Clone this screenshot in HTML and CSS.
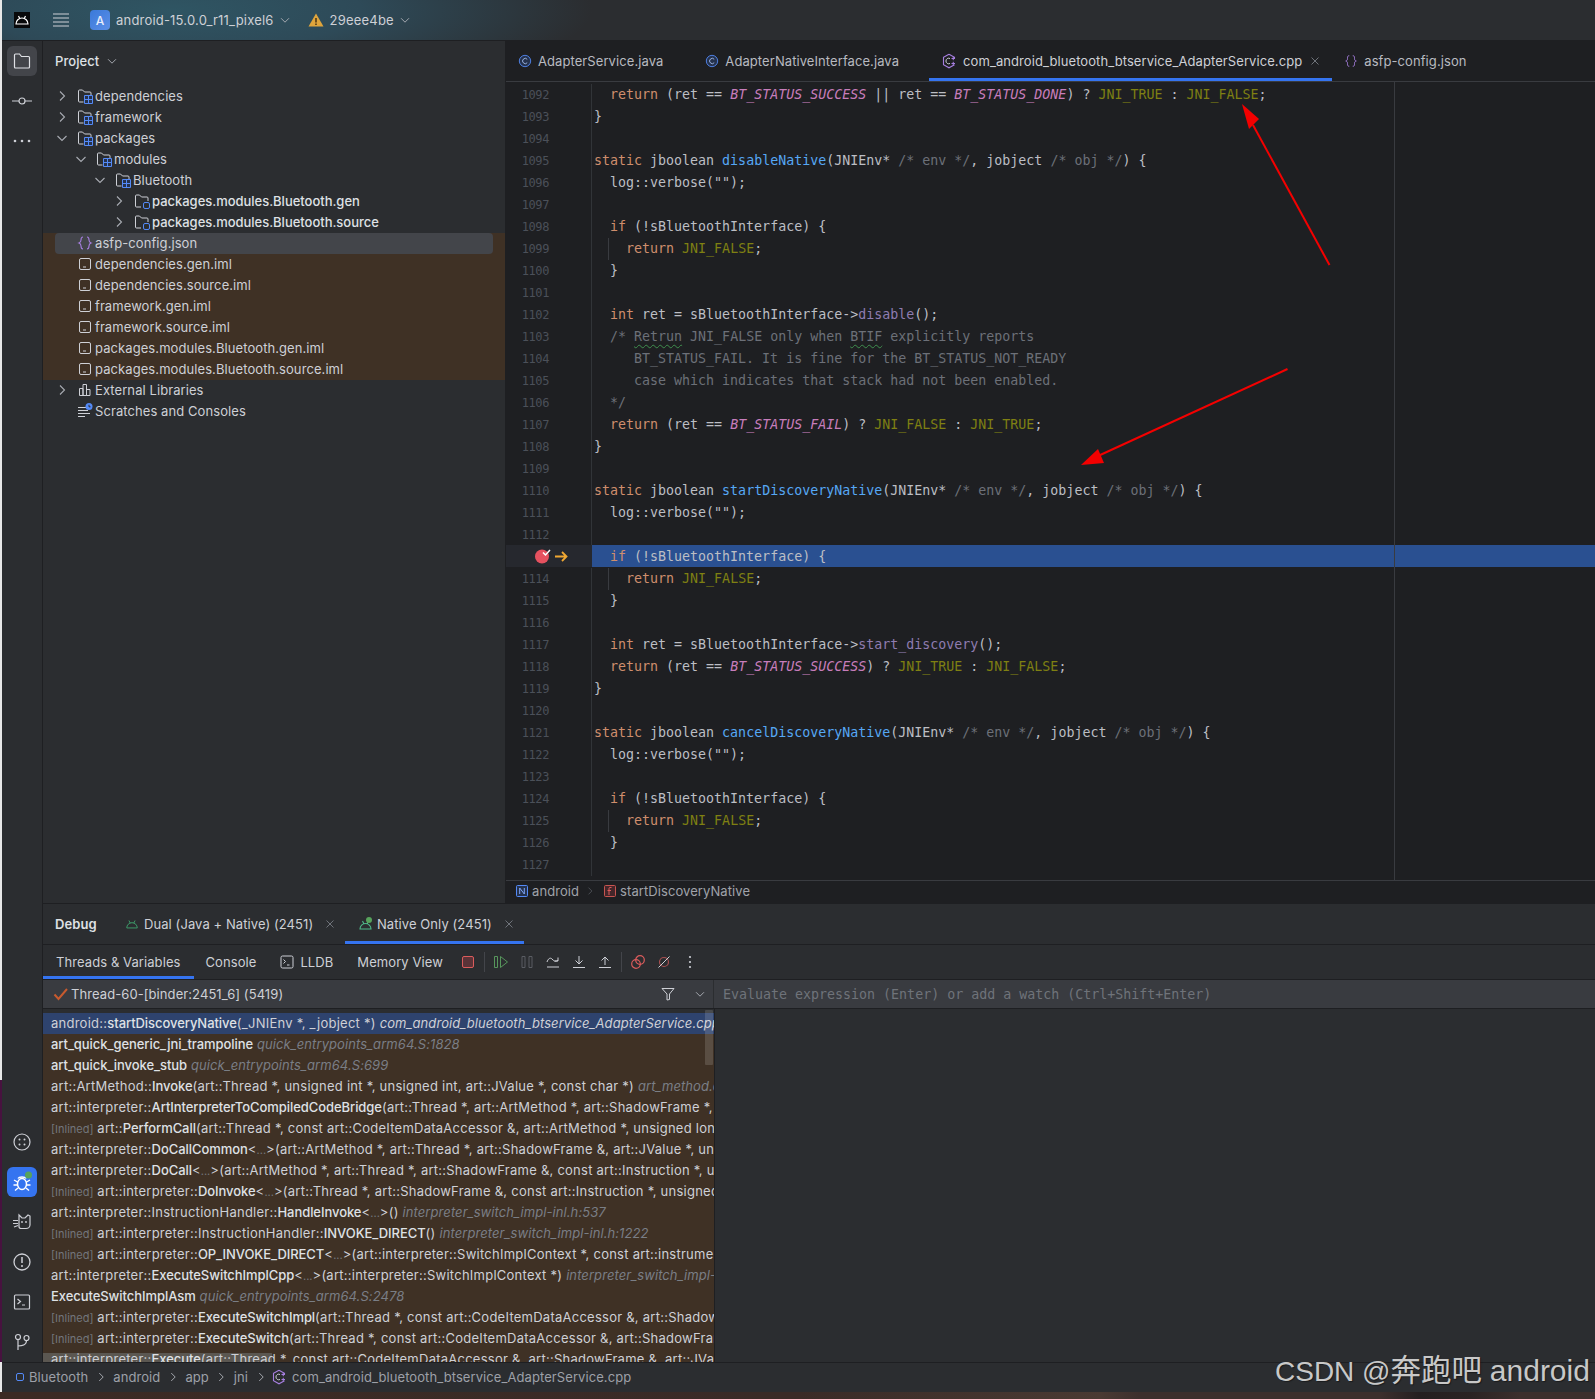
FILE: index.html
```html
<!DOCTYPE html>
<html lang="en">
<head>
<meta charset="utf-8">
<title>Android Studio</title>
<link rel="stylesheet" href="styles.css">
</head>
<body>
<svg class="defs" width="0" height="0">
  <symbol id="chev-r" viewBox="0 0 16 16"><path d="M6 3.5 10.5 8 6 12.500" fill="none" stroke="#a8abb2" stroke-width="1.1"/></symbol>
  <symbol id="chev-d" viewBox="0 0 16 16"><path d="M3.500 6 8 10.500 12.500 6" fill="none" stroke="#a8abb2" stroke-width="1.1"/></symbol>
  <symbol id="mod" viewBox="0 0 16 16"><path d="M6.500 14H2.500a1 1 0 0 1-1-1V3a1 1 0 0 1 1-1h3l2 2h5.500a1 1 0 0 1 1 1v2" fill="none" stroke="#ced0d6"/><path d="M7.500 7.500h8v8h-8z" fill="#25324d" stroke="#548af7"/><path d="M7.500 11.500h8M11.500 7.500v8" stroke="#548af7"/></symbol>
  <symbol id="src" viewBox="0 0 16 16"><path d="M7 14H2.500a1 1 0 0 1-1-1V3a1 1 0 0 1 1-1h3l2 2h5.500a1 1 0 0 1 1 1v3" fill="none" stroke="#ced0d6"/><rect x="9.500" y="9.500" width="6" height="6" rx="1.500" fill="#2b2d30" stroke="#548af7"/></symbol>
  <symbol id="json" viewBox="0 0 16 16"><path d="M6 2C4 2 4 3 4 5s-.5 2.500-2 3c1.500.5 2 1 2 3s0 3 2 3M10 2c2 0 2 1 2 3s.5 2.500 2 3c-1.500.5-2 1-2 3s0 3-2 3" fill="none" stroke="#a77fe0" stroke-width="1.100"/></symbol>
  <symbol id="iml" viewBox="0 0 16 16"><rect x="2.500" y="2.500" width="11" height="11" rx="1.500" fill="none" stroke="#ced0d6"/><path d="M6 11h3" stroke="#ced0d6"/></symbol>
  <symbol id="lib" viewBox="0 0 16 16"><path d="M2.500 6.500h3.500v7H2.500zM6 2.500h3.500v11H6zM9.500 7.500h3.500v6H9.500z" fill="none" stroke="#ced0d6"/></symbol>
  <symbol id="scr" viewBox="0 0 16 16"><path d="M1 4.500h8M1 7.500h10M1 10.500h12M1 13.500h7" stroke="#ced0d6"/><circle cx="12" cy="3.500" r="3.500" fill="#548af7"/><path d="M12 1.800v2h1.500" stroke="#2b2d30" fill="none"/></symbol>
  <symbol id="cls" viewBox="0 0 16 16"><circle cx="8" cy="8" r="6.500" fill="#25324d" stroke="#548af7"/><path d="M10.500 6a3 3 0 1 0 0 4" fill="none" stroke="#a8c0f0"/></symbol>
  <symbol id="cpp" viewBox="0 0 16 16"><path d="M8 1.200 13.500 4.300v1M13.500 11.700 8 14.800 2.500 11.700V4.300L8 1.200" fill="none" stroke="#a77fe0" stroke-width="1.100"/><path d="M9 5.500a2.800 2.800 0 1 0 0 5" fill="none" stroke="#ced0d6"/><path d="M10.500 5.500h3.500M12.250 3.800v3.400M10.500 10.500h3.500M12.250 8.800v3.400" stroke="#a77fe0"/></symbol>
  <symbol id="close" viewBox="0 0 10 10"><path d="M1.500 1.500l7 7M8.500 1.500l-7 7" stroke="#6f737a"/></symbol>
  <symbol id="droid" viewBox="0 0 16 16"><path d="M2 12.500a6 6 0 0 1 12 0zM4.500 4 6 7M11.500 4 10 7" fill="none" stroke="#3d9c6a" stroke-width="1.100"/></symbol>
</svg>

<div class="app">
  <div class="edge"></div>
  <div class="main">
    <header class="titlebar">
      <span class="logo"><svg width="16" height="16" viewBox="0 0 16 16"><path d="M2 12a6 6 0 0 1 12 0zM4.500 4 6 7M11.500 4 10 7" fill="none" stroke="#fff" stroke-width="1.200"/></svg></span>
      <span class="burger"><svg width="16" height="14" viewBox="0 0 16 14"><path d="M0 1h16M0 5h16M0 9h16M0 13h16" stroke="#ced0d6"/></svg></span>
      <span class="badge">A</span>
      <span class="t-name">android-15.0.0_r11_pixel6</span>
      <svg class="t-chev" width="14" height="14"><use href="#chev-d"/></svg>
      <svg class="t-warn" width="16" height="14" viewBox="0 0 16 14"><path d="M8 .500 15.500 13.500H.500z" fill="#e0a53c"/><path d="M8 5v4.500M8 10.500v1.500" stroke="#3a2a10" stroke-width="1.400"/></svg>
      <span class="t-branch">29eee4be</span>
      <svg class="t-chev" width="14" height="14"><use href="#chev-d"/></svg>
    </header>

    <div class="work">
      <nav class="strip">
        <div class="strip-group">
          <span class="tool on"><svg width="20" height="20" viewBox="0 0 20 20"><path d="M2.500 16V4a1 1 0 0 1 1-1h4l2 2.500h7a1 1 0 0 1 1 1V16a1 1 0 0 1-1 1h-13a1 1 0 0 1-1-1z" fill="none" stroke="#dfe1e5" stroke-width="1.200"/></svg></span>
          <span class="tool"><svg width="20" height="20" viewBox="0 0 20 20"><circle cx="10" cy="10" r="3" fill="none" stroke="#ced0d6" stroke-width="1.200"/><path d="M0 10h7M13 10h7" stroke="#ced0d6" stroke-width="1.200"/></svg></span>
          <span class="tool"><svg width="20" height="20" viewBox="0 0 20 20"><circle cx="3" cy="10" r="1.300" fill="#ced0d6"/><circle cx="10" cy="10" r="1.300" fill="#ced0d6"/><circle cx="17" cy="10" r="1.300" fill="#ced0d6"/></svg></span>
        </div>
        <div class="strip-group">
          <span class="tool"><svg width="20" height="20" viewBox="0 0 20 20"><circle cx="10" cy="10" r="8" fill="none" stroke="#ced0d6" stroke-width="1.200"/><circle cx="7.500" cy="7.500" r="1" fill="#ced0d6"/><circle cx="12.500" cy="7.500" r="1" fill="#ced0d6"/><circle cx="7.500" cy="12.500" r="1" fill="#ced0d6"/><circle cx="12.500" cy="12.500" r="1" fill="#ced0d6"/></svg></span>
          <span class="tool bug"><svg width="24" height="24" viewBox="0 0 24 24"><ellipse cx="12" cy="14" rx="4.500" ry="5.500" fill="none" stroke="#fff" stroke-width="1.500"/><path d="M8 8.500c1-2 7-2 8 0M7.500 12 4 10M7.500 15H3.500M8 18l-3 2.500M16.500 12l3.500-2M16.500 15h4M16 18l3 2.500" fill="none" stroke="#fff" stroke-width="1.400"/><circle cx="18.500" cy="5" r="3.500" fill="#57a35c"/></svg></span>
          <span class="tool"><svg width="20" height="20" viewBox="0 0 20 20"><path d="M7 3 10 6h3l3-3 2 1v9c0 2-2 3.500-4 3.500H9c-1 0-2-.5-2-2zM1 8.500h5M1 11.500h5M2 15l4-1.500" fill="none" stroke="#ced0d6" stroke-width="1.200"/><circle cx="10" cy="10" r=".9" fill="#ced0d6"/><circle cx="14" cy="10" r=".9" fill="#ced0d6"/></svg></span>
          <span class="tool"><svg width="20" height="20" viewBox="0 0 20 20"><circle cx="10" cy="10" r="8" fill="none" stroke="#ced0d6" stroke-width="1.300"/><path d="M10 5v6M10 13v2" stroke="#ced0d6" stroke-width="1.500"/></svg></span>
          <span class="tool"><svg width="20" height="20" viewBox="0 0 20 20"><rect x="2.500" y="3" width="15" height="14" rx="1" fill="none" stroke="#ced0d6" stroke-width="1.200"/><path d="M5.500 7l3 2.500-3 2.500M10 13h3" fill="none" stroke="#ced0d6" stroke-width="1.200"/></svg></span>
          <span class="tool"><svg width="20" height="20" viewBox="0 0 20 20"><circle cx="6" cy="5" r="2.500" fill="none" stroke="#ced0d6" stroke-width="1.200"/><circle cx="14.500" cy="6" r="2.500" fill="none" stroke="#ced0d6" stroke-width="1.200"/><path d="M6 7.500V18M6 14c4 0 8.500-1 8.500-5.500" fill="none" stroke="#ced0d6" stroke-width="1.200"/></svg></span>
        </div>
      </nav>

      <div class="content">
        <div class="top">
          <aside class="project">
            <div class="p-head"><span>Project</span><svg width="14" height="14"><use href="#chev-d"/></svg></div>
            <div class="row"><div class="ri d0"><svg class="ch" width="16" height="16"><use href="#chev-r"/></svg><svg class="ic" width="16" height="16"><use href="#mod"/></svg>dependencies</div></div>
            <div class="row"><div class="ri d0"><svg class="ch" width="16" height="16"><use href="#chev-r"/></svg><svg class="ic" width="16" height="16"><use href="#mod"/></svg>framework</div></div>
            <div class="row"><div class="ri d0"><svg class="ch" width="16" height="16"><use href="#chev-d"/></svg><svg class="ic" width="16" height="16"><use href="#mod"/></svg>packages</div></div>
            <div class="row"><div class="ri d1"><svg class="ch" width="16" height="16"><use href="#chev-d"/></svg><svg class="ic" width="16" height="16"><use href="#mod"/></svg>modules</div></div>
            <div class="row"><div class="ri d2"><svg class="ch" width="16" height="16"><use href="#chev-d"/></svg><svg class="ic" width="16" height="16"><use href="#mod"/></svg>Bluetooth</div></div>
            <div class="row"><div class="ri d3 strong"><svg class="ch" width="16" height="16"><use href="#chev-r"/></svg><svg class="ic" width="16" height="16"><use href="#src"/></svg>packages.modules.Bluetooth.gen</div></div>
            <div class="row"><div class="ri d3 strong"><svg class="ch" width="16" height="16"><use href="#chev-r"/></svg><svg class="ic" width="16" height="16"><use href="#src"/></svg>packages.modules.Bluetooth.source</div></div>
            <div class="row ign"><div class="ri d0 sel"><span class="ch-sp"></span><svg class="ic" width="16" height="16"><use href="#json"/></svg>asfp-config.json</div></div>
            <div class="row ign"><div class="ri d0"><span class="ch-sp"></span><svg class="ic" width="16" height="16"><use href="#iml"/></svg>dependencies.gen.iml</div></div>
            <div class="row ign"><div class="ri d0"><span class="ch-sp"></span><svg class="ic" width="16" height="16"><use href="#iml"/></svg>dependencies.source.iml</div></div>
            <div class="row ign"><div class="ri d0"><span class="ch-sp"></span><svg class="ic" width="16" height="16"><use href="#iml"/></svg>framework.gen.iml</div></div>
            <div class="row ign"><div class="ri d0"><span class="ch-sp"></span><svg class="ic" width="16" height="16"><use href="#iml"/></svg>framework.source.iml</div></div>
            <div class="row ign"><div class="ri d0"><span class="ch-sp"></span><svg class="ic" width="16" height="16"><use href="#iml"/></svg>packages.modules.Bluetooth.gen.iml</div></div>
            <div class="row ign"><div class="ri d0"><span class="ch-sp"></span><svg class="ic" width="16" height="16"><use href="#iml"/></svg>packages.modules.Bluetooth.source.iml</div></div>
            <div class="row"><div class="ri d0"><svg class="ch" width="16" height="16"><use href="#chev-r"/></svg><svg class="ic" width="16" height="16"><use href="#lib"/></svg>External Libraries</div></div>
            <div class="row"><div class="ri d0"><span class="ch-sp"></span><svg class="ic" width="16" height="16"><use href="#scr"/></svg>Scratches and Consoles</div></div>
          </aside>

          <section class="editor">
            <div class="tabs">
              <div class="tab"><svg width="14" height="14"><use href="#cls"/></svg>AdapterService.java</div>
              <div class="tab"><svg width="14" height="14"><use href="#cls"/></svg>AdapterNativeInterface.java</div>
              <div class="tab active"><svg width="16" height="16"><use href="#cpp"/></svg>com_android_bluetooth_btservice_AdapterService.cpp<svg class="x" width="10" height="10"><use href="#close"/></svg></div>
              <div class="tab"><svg width="14" height="14"><use href="#json"/></svg>asfp-config.json</div>
            </div>
            <div class="lines">
              <div class="ln"><b>1092</b><code>  <i class="k">return</i> (ret == <i class="m">BT_STATUS_SUCCESS</i> <u>||</u> ret == <i class="m">BT_STATUS_DONE</i>) ? <i class="j">JNI_TRUE</i> : <i class="j">JNI_FALSE</i>;</code></div>
              <div class="ln"><b>1093</b><code>}</code></div>
              <div class="ln"><b>1094</b><code></code></div>
              <div class="ln"><b>1095</b><code><i class="k">static</i> jboolean <i class="f">disableNative</i>(JNIEnv* <i class="c">/* env */</i>, jobject <i class="c">/* obj */</i>) {</code></div>
              <div class="ln"><b>1096</b><code>  log::verbose(<i class="s">""</i>);</code></div>
              <div class="ln"><b>1097</b><code></code></div>
              <div class="ln"><b>1098</b><code>  <i class="k">if</i> (!sBluetoothInterface) {</code></div>
              <div class="ln"><b>1099</b><code class="guide">    <i class="k">return</i> <i class="j">JNI_FALSE</i>;</code></div>
              <div class="ln"><b>1100</b><code>  }</code></div>
              <div class="ln"><b>1101</b><code></code></div>
              <div class="ln"><b>1102</b><code>  <i class="k">int</i> ret = sBluetoothInterface-&gt;<i class="p">disable</i>();</code></div>
              <div class="ln"><b>1103</b><code>  <i class="c">/* <em>Retrun</em> JNI_FALSE only when <em>BTIF</em> explicitly reports</i></code></div>
              <div class="ln"><b>1104</b><code>     <i class="c">BT_STATUS_FAIL. It is fine for the BT_STATUS_NOT_READY</i></code></div>
              <div class="ln"><b>1105</b><code>     <i class="c">case which indicates that stack had not been enabled.</i></code></div>
              <div class="ln"><b>1106</b><code>  <i class="c">*/</i></code></div>
              <div class="ln"><b>1107</b><code>  <i class="k">return</i> (ret == <i class="m">BT_STATUS_FAIL</i>) ? <i class="j">JNI_FALSE</i> : <i class="j">JNI_TRUE</i>;</code></div>
              <div class="ln"><b>1108</b><code>}</code></div>
              <div class="ln"><b>1109</b><code></code></div>
              <div class="ln"><b>1110</b><code><i class="k">static</i> jboolean <i class="f">startDiscoveryNative</i>(JNIEnv* <i class="c">/* env */</i>, jobject <i class="c">/* obj */</i>) {</code></div>
              <div class="ln"><b>1111</b><code>  log::verbose(<i class="s">""</i>);</code></div>
              <div class="ln"><b>1112</b><code></code></div>
              <div class="ln exec"><b><svg width="36" height="16" viewBox="0 0 36 16"><circle cx="8" cy="8.500" r="7" fill="#e5515f"/><path d="M9 4.500l2.500 2.500L16 2" fill="none" stroke="#fff" stroke-width="1.500"/><path d="M21 8.500h11M28 4l4.500 4.500L28 13" fill="none" stroke="#f0a732" stroke-width="1.800"/></svg></b><code>  <i class="k">if</i> (!sBluetoothInterface) {</code></div>
              <div class="ln"><b>1114</b><code class="guide">    <i class="k">return</i> <i class="j">JNI_FALSE</i>;</code></div>
              <div class="ln"><b>1115</b><code>  }</code></div>
              <div class="ln"><b>1116</b><code></code></div>
              <div class="ln"><b>1117</b><code>  <i class="k">int</i> ret = sBluetoothInterface-&gt;<i class="p">start_discovery</i>();</code></div>
              <div class="ln"><b>1118</b><code>  <i class="k">return</i> (ret == <i class="m">BT_STATUS_SUCCESS</i>) ? <i class="j">JNI_TRUE</i> : <i class="j">JNI_FALSE</i>;</code></div>
              <div class="ln"><b>1119</b><code>}</code></div>
              <div class="ln"><b>1120</b><code></code></div>
              <div class="ln"><b>1121</b><code><i class="k">static</i> jboolean <i class="f">cancelDiscoveryNative</i>(JNIEnv* <i class="c">/* env */</i>, jobject <i class="c">/* obj */</i>) {</code></div>
              <div class="ln"><b>1122</b><code>  log::verbose(<i class="s">""</i>);</code></div>
              <div class="ln"><b>1123</b><code></code></div>
              <div class="ln"><b>1124</b><code>  <i class="k">if</i> (!sBluetoothInterface) {</code></div>
              <div class="ln"><b>1125</b><code class="guide">    <i class="k">return</i> <i class="j">JNI_FALSE</i>;</code></div>
              <div class="ln"><b>1126</b><code>  }</code></div>
              <div class="ln"><b>1127</b><code></code></div>
            </div>
            <div class="crumbs">
              <svg class="cr-ic" width="14" height="14" viewBox="0 0 14 14"><rect x="1.500" y="1.500" width="11" height="11" rx="1" fill="#25324d" stroke="#548af7"/><path d="M4.700 10V4l4.600 6V4" fill="none" stroke="#7fa6f7"/></svg>
              <span>android</span>
              <svg class="c-ch" width="12" height="12" viewBox="0 0 16 16"><path d="M6 3.500 10.500 8 6 12.500" fill="none" stroke="#4e5157" stroke-width="1.200"/></svg>
              <svg class="cr-ic" width="14" height="14" viewBox="0 0 14 14"><rect x="1.500" y="1.500" width="11" height="11" rx="1" fill="#45262a" stroke="#c75450"/><path d="M8.500 3.500H7a1 1 0 0 0-1 1V11M4.500 6.500h3.500" fill="none" stroke="#db5c5c"/></svg>
              <span>startDiscoveryNative</span>
            </div>
          </section>
        </div>

        <section class="debug">
          <div class="d-tabs">
            <span class="d-title">Debug</span>
            <div class="d-tab one"><svg width="14" height="14"><use href="#droid"/></svg>Dual (Java + Native) (2451)<svg class="x" width="10" height="10"><use href="#close"/></svg></div>
            <div class="d-tab two"><svg width="16" height="16" viewBox="0 0 16 16"><path d="M2 13a5.500 5.500 0 0 1 11 0zM4.500 5 6 8M10.500 5 9 8" fill="none" stroke="#4fb98a" stroke-width="1.100"/><circle cx="11" cy="4" r="3" fill="#57a35c"/></svg>Native Only (2451)<svg class="x" width="10" height="10"><use href="#close"/></svg></div>
          </div>
          <div class="d-tools">
            <span class="d-sub on">Threads &amp; Variables</span>
            <span class="d-sub">Console</span>
            <span class="d-sub lldb"><svg width="14" height="14" viewBox="0 0 14 14"><rect x="1" y="1" width="12" height="12" rx="1.500" fill="none" stroke="#ced0d6"/><path d="M3.500 4.500l2 2-2 2M7 10h2.500" fill="none" stroke="#ced0d6"/></svg>LLDB</span>
            <span class="d-sub">Memory View</span>
            <div class="icons">
              <svg width="14" height="14" viewBox="0 0 14 14"><rect x="1.500" y="1.500" width="11" height="11" rx="1.500" fill="#5a3338" stroke="#db5c5c"/></svg>
              <span class="sep"></span>
              <svg width="14" height="14" viewBox="0 0 14 14"><path d="M.5 1.500h3v11h-3zM6.500 1.500l7 5.500-7 5.500z" fill="none" stroke="#57965c"/></svg>
              <svg width="14" height="14" viewBox="0 0 14 14"><path d="M2 1.500h3v11H2zM9 1.500h3v11H9z" fill="none" stroke="#5a5d63"/></svg>
              <svg width="14" height="14" viewBox="0 0 14 14"><path d="M1 7c1-3 3-5 5-3s3 3 6 1.500M12 2.500v3.500H8.500M1 12h12" fill="none" stroke="#ced0d6"/></svg>
              <svg width="14" height="14" viewBox="0 0 14 14"><path d="M7 1v8M3.500 5.500 7 9l3.500-3.500M1 12.500h12" fill="none" stroke="#ced0d6"/></svg>
              <svg width="14" height="14" viewBox="0 0 14 14"><path d="M7 10V2M3.500 5.500 7 2l3.500 3.500M1 12.500h12" fill="none" stroke="#ced0d6"/></svg>
              <span class="sep"></span>
              <svg width="14" height="14" viewBox="0 0 14 14"><circle cx="5" cy="9" r="4.300" fill="none" stroke="#db5c5c" stroke-width="1.200"/><circle cx="9" cy="5" r="4.300" fill="none" stroke="#db5c5c" stroke-width="1.200"/></svg>
              <svg width="14" height="14" viewBox="0 0 14 14"><circle cx="7" cy="7" r="4.500" fill="none" stroke="#a85050" stroke-width="1.200"/><path d="M1.500 12.500 12.500 1.500" stroke="#ced0d6"/></svg>
              <svg class="more" width="6" height="14" viewBox="0 0 6 14"><circle cx="3" cy="2" r="1.100" fill="#ced0d6"/><circle cx="3" cy="7" r="1.100" fill="#ced0d6"/><circle cx="3" cy="12" r="1.100" fill="#ced0d6"/></svg>
            </div>
          </div>
          <div class="d-thread">
            <div class="th-left">
              <svg width="16" height="14" viewBox="0 0 16 14"><path d="M1.500 7.500 5.500 12 14 2" fill="none" stroke="#c75a2e" stroke-width="2"/></svg>
              <span class="th-name">Thread-60-[binder:2451_6] (5419)</span>
              <svg class="th-filter" width="14" height="14" viewBox="0 0 14 14"><path d="M1 1.500h12L8.500 7v5.500L6 13V7z" fill="none" stroke="#ced0d6"/></svg>
              <svg class="th-chev" width="14" height="14"><use href="#chev-d"/></svg>
            </div>
            <div class="th-right">Evaluate expression (Enter) or add a watch (Ctrl+Shift+Enter)</div>
          </div>
          <div class="d-body">
            <div class="frames">
              <div class="fr cur">android::<b>startDiscoveryNative</b>(_JNIEnv *, _jobject *) <i>com_android_bluetooth_btservice_AdapterService.cpp:1113</i></div>
              <div class="fr"><b>art_quick_generic_jni_trampoline</b> <i>quick_entrypoints_arm64.S:1828</i></div>
              <div class="fr"><b>art_quick_invoke_stub</b> <i>quick_entrypoints_arm64.S:699</i></div>
              <div class="fr">art::ArtMethod::<b>Invoke</b>(art::Thread *, unsigned int *, unsigned int, art::JValue *, const char *) <i>art_method.cc:401</i></div>
              <div class="fr">art::interpreter::<b>ArtInterpreterToCompiledCodeBridge</b>(art::Thread *, art::ArtMethod *, art::ShadowFrame *, unsigned short)</div>
              <div class="fr"><small>[Inlined]</small> art::<b>PerformCall</b>(art::Thread *, const art::CodeItemDataAccessor &amp;, art::ArtMethod *, unsigned long, art::JValue *)</div>
              <div class="fr">art::interpreter::<b>DoCallCommon</b>&lt;<small>...</small>&gt;(art::ArtMethod *, art::Thread *, art::ShadowFrame &amp;, art::JValue *, unsigned short)</div>
              <div class="fr">art::interpreter::<b>DoCall</b>&lt;<small>...</small>&gt;(art::ArtMethod *, art::Thread *, art::ShadowFrame &amp;, const art::Instruction *, unsigned short)</div>
              <div class="fr"><small>[Inlined]</small> art::interpreter::<b>DoInvoke</b>&lt;<small>...</small>&gt;(art::Thread *, art::ShadowFrame &amp;, const art::Instruction *, unsigned short)</div>
              <div class="fr">art::interpreter::InstructionHandler::<b>HandleInvoke</b>&lt;<small>...</small>&gt;() <i>interpreter_switch_impl-inl.h:537</i></div>
              <div class="fr"><small>[Inlined]</small> art::interpreter::InstructionHandler::<b>INVOKE_DIRECT</b>() <i>interpreter_switch_impl-inl.h:1222</i></div>
              <div class="fr"><small>[Inlined]</small> art::interpreter::<b>OP_INVOKE_DIRECT</b>&lt;<small>...</small>&gt;(art::interpreter::SwitchImplContext *, const art::instrumentation::Instrumentation *)</div>
              <div class="fr">art::interpreter::<b>ExecuteSwitchImplCpp</b>&lt;<small>...</small>&gt;(art::interpreter::SwitchImplContext *) <i>interpreter_switch_impl-inl.h:1</i></div>
              <div class="fr"><b>ExecuteSwitchImplAsm</b> <i>quick_entrypoints_arm64.S:2478</i></div>
              <div class="fr"><small>[Inlined]</small> art::interpreter::<b>ExecuteSwitchImpl</b>(art::Thread *, const art::CodeItemDataAccessor &amp;, art::ShadowFrame &amp;, art::JValue)</div>
              <div class="fr"><small>[Inlined]</small> art::interpreter::<b>ExecuteSwitch</b>(art::Thread *, const art::CodeItemDataAccessor &amp;, art::ShadowFrame &amp;, art::JValue)</div>
              <div class="fr hov">art::interpreter::<b>Execute</b>(art::Thread *, const art::CodeItemDataAccessor &amp;, art::ShadowFrame &amp;, art::JValue, bool)</div>
              <span class="thumb"></span>
            </div>
            <div class="watches"></div>
          </div>
        </section>
      </div>
    </div>

    <footer class="status">
      <svg class="st-mod" width="8" height="8" viewBox="0 0 8 8"><rect x=".5" y=".5" width="7" height="7" rx="1.500" fill="none" stroke="#548af7"/></svg>
      <span>Bluetooth</span>
      <svg class="st-ch" width="14" height="14"><use href="#chev-r"/></svg>
      <span>android</span>
      <svg class="st-ch" width="14" height="14"><use href="#chev-r"/></svg>
      <span>app</span>
      <svg class="st-ch" width="14" height="14"><use href="#chev-r"/></svg>
      <span>jni</span>
      <svg class="st-ch" width="14" height="14"><use href="#chev-r"/></svg>
      <svg class="st-cpp" width="16" height="16"><use href="#cpp"/></svg>
      <span>com_android_bluetooth_btservice_AdapterService.cpp</span>
    </footer>
    <div class="wallpaper"></div>
  </div>
</div>

<svg class="arrows" width="1595" height="1399" viewBox="0 0 1595 1399">
  <path d="M1329.500 265 1253 125" stroke="#f40000" stroke-width="2" fill="none"/>
  <path d="M1242 104 1259 119 1249 129z" fill="#f40000"/>
  <path d="M1287.500 369 1098 456" stroke="#f40000" stroke-width="2" fill="none"/>
  <path d="M1081 465 1098 449 1104 463z" fill="#f40000"/>
</svg>
<div class="mark">CSDN @<span class="mk-cjk">奔跑吧</span> <span class="mk-lat">android</span></div>
</body>
</html>
```

FILE: styles.css
```css
* { box-sizing: border-box; }
html, body { margin: 0; padding: 0; }
body {
  width: 1595px; height: 1399px; overflow: hidden; position: relative;
  background: #2b2d30; color: #ced0d6;
  font-family: Inter, "Noto Sans", sans-serif; font-size: 13px; letter-spacing: .08px;
}
svg { display: block; flex: none; }
.defs { position: absolute; }
.app { display: flex; height: 100%; }
.edge { width: 2px; background: linear-gradient(#e8e8e8 0, #e8e8e8 1080px, #47123f 1080px, #47123f 1362px, #e8e8e8 1362px); }
.main { width: 1593px; display: flex; flex-direction: column; }

/* title bar */
.titlebar {
  height: 41px; display: flex; align-items: center; border-bottom: 1px solid #1e1f22; flex: none;
  background: radial-gradient(ellipse 420px 90px at 170px 10px, #2f5563 0, #2e4a58 45%, #2b2d30 100%);
}
.logo { width: 16px; height: 16px; background: #08090a; margin-left: 12px; }
.burger { margin-left: 23px; }
.badge {
  width: 20px; height: 20px; margin-left: 21px; border-radius: 4px; color: #e8eefc; font-size: 12px; font-weight: 500;
  display: flex; align-items: center; justify-content: center; background: linear-gradient(135deg, #3a79d9, #5b8fe8);
}
.t-name { margin-left: 6px; letter-spacing: .2px; }
.t-chev { margin-left: 4px; }
.t-warn { margin-left: 16px; }
.t-branch { margin-left: 6px; letter-spacing: .2px; }

/* work area */
.work { flex: 1; display: flex; min-height: 0; }
.strip { width: 41px; flex: none; border-right: 1px solid #1e1f22; display: flex; flex-direction: column; justify-content: space-between; padding: 5px 0 5px 5px; }
.strip-group { display: flex; flex-direction: column; gap: 10px; }
.tool { width: 30px; height: 30px; border-radius: 6px; display: flex; align-items: center; justify-content: center; }
.tool.on { background: #43454a; }
.tool.bug { background: #3574f0; }
.content { flex: 1; min-width: 0; display: flex; flex-direction: column; }
.top { height: 862px; flex: none; display: flex; }

/* project */
.project { width: 462px; flex: none; }
.p-head { height: 45px; padding: 0 0 5px 12px; display: flex; align-items: center; gap: 6px; font-weight: 500; color: #dfe1e5; }
.row { height: 21px; padding: 0 12px; }
.row.ign { background: #3f3125; }
.ri { height: 21px; padding-bottom: 2px; display: flex; align-items: center; white-space: nowrap; border-radius: 4px; }
.ri.sel { background: #43454a; }
.d1 { padding-left: 19px; }
.d2 { padding-left: 38px; }
.d3 { padding-left: 57px; }
.strong { font-weight: 500; letter-spacing: -.02px; color: #dfe1e5; }
.ch { margin-left: -1px; margin-right: 7px; }
.ch-sp { width: 22px; flex: none; }
.ic { margin-right: 2px; }

/* editor */
.editor { flex: 1; min-width: 0; display: flex; flex-direction: column; background: #1e1f22; border-left: 1px solid #1e1f22; position: relative; }
.editor::after { content: ""; position: absolute; left: 888px; top: 41px; width: 1px; height: 798px; background: #393b40; }
.tabs { height: 41px; display: flex; border-bottom: 1px solid #393b40; flex: none; }
.tab { height: 40px; padding: 0 30px 0 12px; display: flex; align-items: center; gap: 6px; white-space: nowrap; color: #b8bac0; }
.tab.active { padding-right: 12px; box-shadow: inset 0 -3px 0 #3574f0; color: #ced0d6; }
.tab .x { margin-left: 2px; }
.lines { height: 798px; flex: none; padding-top: 2px; overflow: hidden; }
.ln { height: 22px; display: flex; font: 13.3px/22px "DejaVu Sans Mono", monospace; letter-spacing: 0; }
.ln b { width: 86px; flex: none; padding-right: 42px; text-align: right; font-weight: 400; font-size: 12px; letter-spacing: -.4px; color: #4b5059; border-right: 1px solid #313438; }
.ln code { font: inherit; flex: 1; padding-left: 2px; white-space: pre; color: #bcbec4; }
.ln code.guide { background: linear-gradient(#393b40, #393b40) 16px 0 / 1px 100% no-repeat; }
.ln i { font-style: normal; }
.ln .k { color: #cf8e6d; }
.ln .f { color: #56a8f5; }
.ln .m { color: #c77dbb; font-style: italic; }
.ln .j { color: #7f8012; }
.ln .c { color: #6c7078; }
.ln .p { color: #8e7cb0; }
.ln .s { color: #bcbec4; }
.ln u { text-decoration: none; }
.ln em { font-style: normal; text-decoration: underline wavy #3f8f4e 1px; text-underline-offset: 3px; }
.ln.exec { margin-top: -1px; margin-bottom: 1px; line-height: 24px; }
.exec b { background: #26282e; padding: 3px 22px 0 0; display: flex; justify-content: flex-end; border-right: 0; }
.exec code { background: #2a5091; }
.crumbs { height: 23px; flex: none; border-top: 1px solid #393b40; display: flex; align-items: center; gap: 5px; padding: 0 0 2px 7px; color: #a0a3aa; }
.crumbs .c-ch { margin: 0; }
.crumbs .cr-ic { margin: 0 -2px 0 2px; }

/* debug */
.debug { flex: 1; min-height: 0; display: flex; flex-direction: column; border-top: 1px solid #1e1f22; }
.d-tabs { height: 41px; flex: none; display: flex; align-items: center; border-bottom: 1px solid #1e1f22; padding-left: 12px; }
.d-title { font-weight: 600; color: #dfe1e5; width: 70px; }
.d-tab { height: 40px; display: flex; align-items: center; gap: 5px; white-space: nowrap; }
.d-tab .x { margin-left: 7px; }
.d-tab.one { width: 220px; }
.d-tab.two { padding: 0 10px 0 13px; gap: 3px; box-shadow: inset 0 -3px 0 #3574f0; }
.d-tab.two .x { margin-left: 9px; }
.d-tools { height: 35px; flex: none; display: flex; align-items: center; border-bottom: 1px solid #1e1f22; }
.d-sub { height: 34px; display: flex; align-items: center; gap: 6px; padding: 0 12px; }
.d-sub.on { padding: 0 13px; box-shadow: inset 0 -3px 0 #3574f0; }
.icons { display: flex; align-items: center; gap: 12px; margin-left: 6px; }
.sep { width: 1px; height: 20px; background: #43454a; margin: 0 -3px; }
.more { margin-left: 4px; }
.d-thread { height: 29px; flex: none; display: flex; background: #393b40; border-bottom: 1px solid #1e1f22; }
.th-left { width: 671px; flex: none; display: flex; align-items: center; padding-left: 10px; gap: 2px; border-right: 1px solid #2b2d30; }
.th-name { flex: 1; }
.th-filter { margin-right: 16px; }
.th-chev { margin-right: 6px; }
.th-right { flex: 1; padding-left: 9px; font: 13.3px/29px "DejaVu Sans Mono", monospace; letter-spacing: 0; color: #6f737a; white-space: nowrap; }
.d-body { flex: 1; min-height: 0; display: flex; }
.frames { width: 671px; flex: none; padding-top: 4px; overflow: hidden; position: relative; }
.fr { height: 21px; line-height: 21px; padding-left: 8px; background: #3f3125; white-space: nowrap; overflow: hidden; color: #ced0d6; letter-spacing: .25px; }
.fr.cur { background: #2e436e; }
.fr.hov { background: linear-gradient(#5b5751, #5b5751) 0 4px / 229px 17px no-repeat, #3f3125; }
.fr b { font-weight: 500; color: #dfe1e5; letter-spacing: -.06px; }
.fr i { color: #7a7e85; letter-spacing: .08px; }
.fr.cur i { color: #ced0d6; }
.fr small { font-size: 11px; color: #73767c; letter-spacing: 0; }
.thumb { position: absolute; left: 662px; top: 1px; width: 8px; height: 55px; background: rgba(255, 255, 255, .14); border-radius: 1px; }
.watches { flex: 1; border-left: 1px solid #1e1f22; }

/* status */
.status { height: 30px; flex: none; border-top: 1px solid #1e1f22; display: flex; align-items: center; padding: 0 0 2px 14px; color: #9da0a8; }
.st-mod { margin-right: 5px; }
.st-ch { margin: 0 5.500px; }
.st-cpp { margin: 0 5px 0 -2px; }
.wallpaper { height: 7px; flex: none; background: linear-gradient(90deg, #3b2a24 0, #3a2b27 800px, #4a3a33 1100px, #3c2f2d 1140px, #3c2f2d 1380px, #241f20 1420px, #2a2323 1470px, #3c2f2d 1520px); margin-left: -2px; }

/* overlays */
.arrows { position: absolute; left: 0; top: 0; pointer-events: none; }
.mark { position: absolute; left: 1275px; top: 1352px; font: 28px/36px "Liberation Sans", "Noto Sans CJK SC", sans-serif; letter-spacing: 0; color: #c8c8c8; white-space: nowrap; text-shadow: 1px 1px 1px rgba(0, 0, 0, .4); }
.mk-cjk { font-size: 30.5px; }
.mk-lat { font-size: 30px; }
```
